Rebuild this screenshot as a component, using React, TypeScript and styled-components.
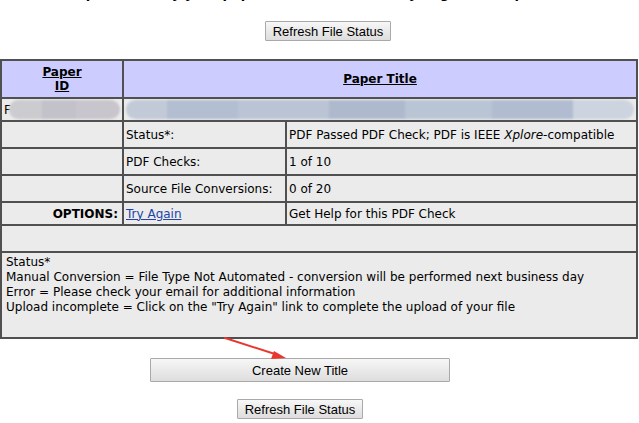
import React from 'react';
import styled, { createGlobalStyle } from 'styled-components';

const GlobalStyle = createGlobalStyle`
  html, body {
    margin: 0;
    padding: 0;
    background: #ffffff;
    overflow: hidden;
  }
  body {
    font-family: 'DejaVu Sans', Verdana, sans-serif;
    font-size: 12px;
    color: #000000;
  }
`;

const Page = styled.div`
  position: relative;
  width: 639px;
  height: 423px;
  overflow: hidden;
`;

// page is scrolled: only the descenders of this line still show
const CutNote = styled.div`
  margin-top: -14px;
  height: 16px;
  line-height: 16px;
  text-align: center;
  font-weight: bold;
  font-size: 13px;
  padding-left: 2px;
`;

const ButtonRow = styled.div<{ $shift?: number; $top: number }>`
  display: flex;
  justify-content: center;
  padding-top: ${({ $top }) => $top}px;
  padding-left: ${({ $shift = 0 }) => $shift}px;
`;

const BottomArea = styled.div`
  width: 600px;
`;

const Button = styled.button<{ $wide?: boolean }>`
  font-family: 'Liberation Sans', Arial, sans-serif;
  font-size: 13px;
  color: #000000;
  background: linear-gradient(#f7f7f7, #dddddd);
  border: 1px solid #a9a9a9;
  border-radius: 1px;
  padding: 0 7px;
  height: ${({ $wide }) => ($wide ? 24 : 20)}px;
  width: ${({ $wide }) => ($wide ? '300px' : 'auto')};
  margin: 0;
  cursor: pointer;
`;

const Table = styled.table`
  width: 638px;
  margin-top: 18px;
  border: 1px solid #505050;
  border-spacing: 0;
  table-layout: fixed;
`;

const Row = styled.tr<{ $h: number }>`
  height: ${({ $h }) => $h}px;
`;

const Cell = styled.td<{ $head?: boolean; $align?: 'left' | 'center' | 'right'; $top?: boolean }>`
  border: 1px solid #505050;
  background: ${({ $head }) => ($head ? '#ccccff' : '#ebebeb')};
  padding: 0 2px;
  text-align: ${({ $align = 'left' }) => $align};
  vertical-align: ${({ $top }) => ($top ? 'top' : 'middle')};
  white-space: nowrap;
  overflow: hidden;
  line-height: 14px;
`;

const HeadLink = styled.a`
  font-weight: bold;
  color: #000000;
  text-decoration: underline;
`;

const Options = styled.span`
  font-weight: bold;
  padding-right: 2px;
`;

const TryLink = styled.a`
  color: #2244a8;
  text-decoration: underline;
`;

const Notes = styled.div`
  padding: 2px 2px 0;
  line-height: 15px;
`;

const RedactRow = styled.div`
  display: flex;
  align-items: center;
`;

const Redacted = styled.span<{ $tone: 'gray' | 'blue' }>`
  display: block;
  flex: 1;
  height: 19px;
  margin-left: ${({ $tone }) => ($tone === 'gray' ? '-2px' : '0')};
  border-radius: 10px;
  filter: blur(1px);
  background: ${({ $tone }) =>
    $tone === 'gray'
      ? 'linear-gradient(90deg, #cbcbd0 0 30%, #c3c1c9 30% 60%, #c9c5cc 60% 100%)'
      : 'linear-gradient(90deg, #c2cad8 0 8%, #b3bed1 8% 22%, #bac4d5 22% 40%, #aeb9ce 40% 55%, #b9c4d5 55% 72%, #b1bcd0 72% 88%, #cdd4df 88% 100%)'};
`;

const Overlay = styled.svg`
  position: absolute;
  left: 0;
  top: 0;
  pointer-events: none;
`;

const rows = [
  { label: 'Status*:', value: (<>PDF Passed PDF Check; PDF is IEEE <i>Xplore</i>-compatible</>) },
  { label: 'PDF Checks:', value: '1 of 10' },
  { label: 'Source File Conversions:', value: '0 of 20' },
];

export default function App() {
  return (
    <Page>
      <GlobalStyle />
      <CutNote>(please verify your paper ID and title before you go on to upload)</CutNote>
      <ButtonRow $top={19} $shift={17}>
        <Button type="button">Refresh File Status</Button>
      </ButtonRow>

      <Table>
        <colgroup>
          <col style={{ width: 122 }} />
          <col style={{ width: 163 }} />
          <col />
        </colgroup>
        <tbody>
          <Row $h={38}>
            <Cell $head $align="center">
              <HeadLink href="#">Paper<br />ID</HeadLink>
            </Cell>
            <Cell $head $align="center" colSpan={2}>
              <HeadLink href="#">Paper Title</HeadLink>
            </Cell>
          </Row>
          <Row $h={23}>
            <Cell>
              <RedactRow>
                F<Redacted $tone="gray" />
              </RedactRow>
            </Cell>
            <Cell colSpan={2}>
              <RedactRow>
                <Redacted $tone="blue" />
              </RedactRow>
            </Cell>
          </Row>
          {rows.map((r) => (
            <Row $h={27} key={r.label}>
              <Cell />
              <Cell>{r.label}</Cell>
              <Cell>{r.value}</Cell>
            </Row>
          ))}
          <Row $h={23}>
            <Cell $align="right">
              <Options>OPTIONS:</Options>
            </Cell>
            <Cell>
              <TryLink href="#">Try Again</TryLink>
            </Cell>
            <Cell>Get Help for this PDF Check</Cell>
          </Row>
          <Row $h={27}>
            <Cell colSpan={3} />
          </Row>
          <Row $h={86}>
            <Cell colSpan={3} $top>
              <Notes>
                Status*<br />
                Manual Conversion = File Type Not Automated - conversion will be performed next business day<br />
                Error = Please check your email for additional information<br />
                Upload incomplete = Click on the "Try Again" link to complete the upload of your file
              </Notes>
            </Cell>
          </Row>
        </tbody>
      </Table>

      <BottomArea>
        <ButtonRow $top={19}>
          <Button type="button" $wide>Create New Title</Button>
        </ButtonRow>
        <ButtonRow $top={17}>
          <Button type="button">Refresh File Status</Button>
        </ButtonRow>
      </BottomArea>

      <Overlay width="639" height="423" viewBox="0 0 639 423">
        <line x1="225" y1="338" x2="278" y2="355" stroke="#e8382e" strokeWidth="2" strokeLinecap="round" />
        <polygon points="286,358 274,351 271,359" fill="#e8382e" />
      </Overlay>
    </Page>
  );
}
